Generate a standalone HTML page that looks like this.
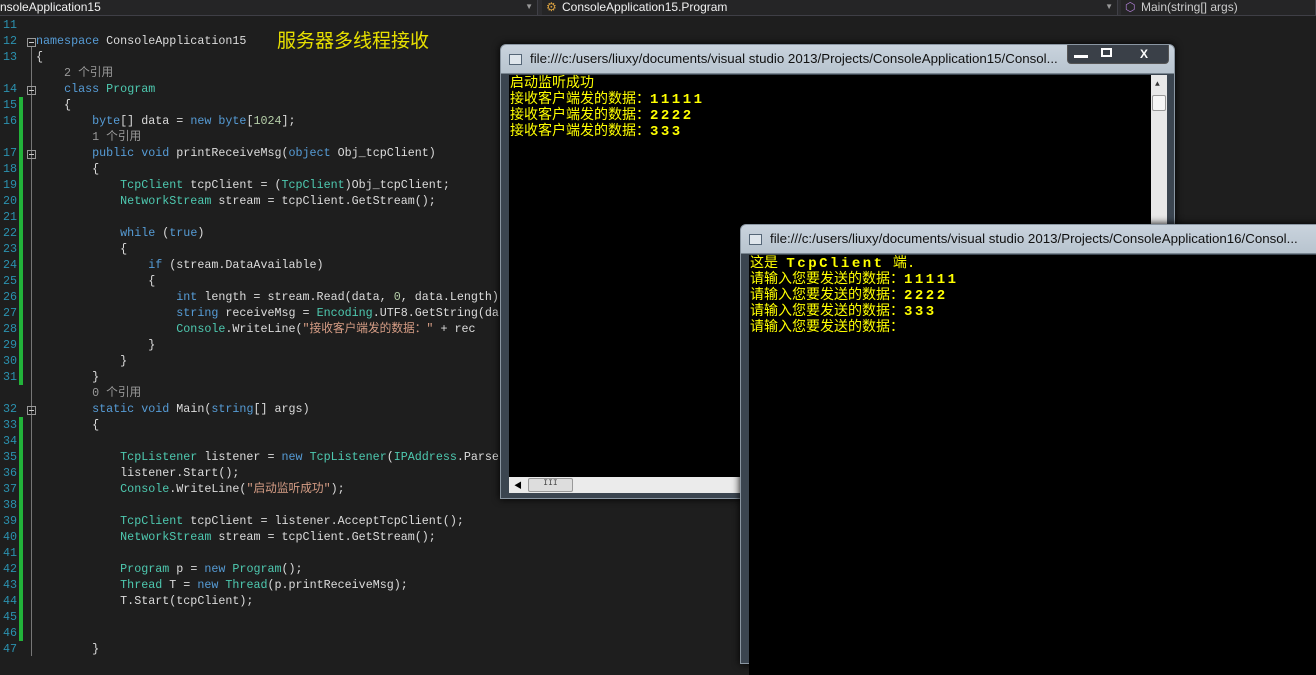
<!DOCTYPE html>
<html><head><meta charset="utf-8"><style>
*{margin:0;padding:0;box-sizing:border-box}
body{width:1316px;height:656px;overflow:hidden;background:#1e1e1e;position:relative;font-family:"Liberation Mono","Noto Sans CJK SC",monospace}
.top{position:absolute;left:0;top:0;width:1316px;height:16px;background:#2d2d30;border-bottom:1px solid #3f3f46;font-family:"Liberation Sans","Noto Sans CJK SC",sans-serif;font-size:12px;color:#f1f1f1}
.top div{position:absolute;top:0;height:15px;line-height:14px;background:#252526;border-right:1px solid #3f3f46}
.ln{position:absolute;left:0;width:17px;text-align:right;color:#2b91af;font-size:11.7px;height:16px;line-height:16px}
.c{position:absolute;left:36px;white-space:pre;font-size:11.7px;color:#dcdcdc;height:16px;line-height:16px}
.k{color:#569cd6}.t{color:#4ec9b0}.s{color:#d69d85}.n{color:#b5cea8}.r{color:#999}
.fold{position:absolute;left:27px;width:9px;height:9px;border:1px solid #999;}
.fold:after{content:"";position:absolute;left:1px;top:3px;width:5px;height:1px;background:#ccc}
.vl{position:absolute;left:31px;width:1px;background:#777}
.gb{position:absolute;left:19px;width:4px;background:#22b33a}
.win{position:absolute;background:#3b4550;border:1px solid #8a96a2;border-radius:6px 6px 0 0;box-shadow:0 0 8px #000}
.tt{position:absolute;font-family:"Liberation Sans",sans-serif;font-size:13.3px;color:#111;white-space:nowrap}
.con{position:absolute;background:#000;color:#ff0;font-family:"Liberation Mono","Noto Sans CJK SC",monospace;font-size:14px;line-height:16px;white-space:pre}
.con b{font-family:"Liberation Mono",monospace;font-weight:bold;font-size:14px;letter-spacing:2.5px}
</style></head><body>
<div class="top">
<div style="left:0;width:538px;padding-left:0">nsoleApplication15<span style="position:absolute;right:4px;color:#999;font-size:8px">▼</span></div>
<div style="left:542px;width:576px;padding-left:20px"><span style="position:absolute;left:4px;color:#d8a040">⚙</span>ConsoleApplication15.Program<span style="position:absolute;right:4px;color:#999;font-size:8px">▼</span></div>
<div style="left:1121px;width:195px;padding-left:20px;color:#ccc"><span style="position:absolute;left:4px;color:#b180d7">⬡</span>Main(string[] args)</div>
</div>

<div class="gb" style="top:97px;height:288px"></div>
<div class="gb" style="top:417px;height:224px"></div>
<div class="vl" style="top:46px;height:610px"></div>

<div class="ln" style="top:17px">11</div>
<div class="ln" style="top:33px">12</div><div class="fold" style="top:38px"></div><div class="c" style="top:33px"><span class="k">namespace</span> ConsoleApplication15</div>
<div style="position:absolute;left:277px;top:31px;color:#e8e000;font-family:'Liberation Sans','Noto Sans CJK SC',sans-serif;font-size:19px;line-height:22px">服务器多线程接收</div>
<div class="ln" style="top:49px">13</div><div class="c" style="top:49px">{</div>
<div class="c r" style="top:65px;color:#999">    2 个引用</div>
<div class="ln" style="top:81px">14</div><div class="fold" style="top:86px"></div><div class="c" style="top:81px">    <span class="k">class</span> <span class="t">Program</span></div>
<div class="ln" style="top:97px">15</div><div class="c" style="top:97px">    {</div>
<div class="ln" style="top:113px">16</div><div class="c" style="top:113px">        <span class="k">byte</span>[] data = <span class="k">new</span> <span class="k">byte</span>[<span class="n">1024</span>];</div>
<div class="c" style="top:129px;color:#999">        1 个引用</div>
<div class="ln" style="top:145px">17</div><div class="fold" style="top:150px"></div><div class="c" style="top:145px">        <span class="k">public</span> <span class="k">void</span> printReceiveMsg(<span class="k">object</span> Obj_tcpClient)</div>
<div class="ln" style="top:161px">18</div><div class="c" style="top:161px">        {</div>
<div class="ln" style="top:177px">19</div><div class="c" style="top:177px">            <span class="t">TcpClient</span> tcpClient = (<span class="t">TcpClient</span>)Obj_tcpClient;</div>
<div class="ln" style="top:193px">20</div><div class="c" style="top:193px">            <span class="t">NetworkStream</span> stream = tcpClient.GetStream();</div>
<div class="ln" style="top:209px">21</div>
<div class="ln" style="top:225px">22</div><div class="c" style="top:225px">            <span class="k">while</span> (<span class="k">true</span>)</div>
<div class="ln" style="top:241px">23</div><div class="c" style="top:241px">            {</div>
<div class="ln" style="top:257px">24</div><div class="c" style="top:257px">                <span class="k">if</span> (stream.DataAvailable)</div>
<div class="ln" style="top:273px">25</div><div class="c" style="top:273px">                {</div>
<div class="ln" style="top:289px">26</div><div class="c" style="top:289px">                    <span class="k">int</span> length = stream.Read(data, <span class="n">0</span>, data.Length);</div>
<div class="ln" style="top:305px">27</div><div class="c" style="top:305px">                    <span class="k">string</span> receiveMsg = <span class="t">Encoding</span>.UTF8.GetString(da</div>
<div class="ln" style="top:321px">28</div><div class="c" style="top:321px">                    <span class="t">Console</span>.WriteLine(<span class="s">"接收客户端发的数据："</span> + rec</div>
<div class="ln" style="top:337px">29</div><div class="c" style="top:337px">                }</div>
<div class="ln" style="top:353px">30</div><div class="c" style="top:353px">            }</div>
<div class="ln" style="top:369px">31</div><div class="c" style="top:369px">        }</div>
<div class="c" style="top:385px;color:#999">        0 个引用</div>
<div class="ln" style="top:401px">32</div><div class="fold" style="top:406px"></div><div class="c" style="top:401px">        <span class="k">static</span> <span class="k">void</span> Main(<span class="k">string</span>[] args)</div>
<div class="ln" style="top:417px">33</div><div class="c" style="top:417px">        {</div>
<div class="ln" style="top:433px">34</div>
<div class="ln" style="top:449px">35</div><div class="c" style="top:449px">            <span class="t">TcpListener</span> listener = <span class="k">new</span> <span class="t">TcpListener</span>(<span class="t">IPAddress</span>.Parse</div>
<div class="ln" style="top:465px">36</div><div class="c" style="top:465px">            listener.Start();</div>
<div class="ln" style="top:481px">37</div><div class="c" style="top:481px">            <span class="t">Console</span>.WriteLine(<span class="s">"启动监听成功"</span>);</div>
<div class="ln" style="top:497px">38</div>
<div class="ln" style="top:513px">39</div><div class="c" style="top:513px">            <span class="t">TcpClient</span> tcpClient = listener.AcceptTcpClient();</div>
<div class="ln" style="top:529px">40</div><div class="c" style="top:529px">            <span class="t">NetworkStream</span> stream = tcpClient.GetStream();</div>
<div class="ln" style="top:545px">41</div>
<div class="ln" style="top:561px">42</div><div class="c" style="top:561px">            <span class="t">Program</span> p = <span class="k">new</span> <span class="t">Program</span>();</div>
<div class="ln" style="top:577px">43</div><div class="c" style="top:577px">            <span class="t">Thread</span> T = <span class="k">new</span> <span class="t">Thread</span>(p.printReceiveMsg);</div>
<div class="ln" style="top:593px">44</div><div class="c" style="top:593px">            T.Start(tcpClient);</div>
<div class="ln" style="top:609px">45</div>
<div class="ln" style="top:625px">46</div>
<div class="ln" style="top:641px">47</div><div class="c" style="top:641px">        }</div>

<!-- window 1 -->
<div class="win" style="left:500px;top:44px;width:675px;height:455px;background:linear-gradient(#c9d3dd,#b8c4cf 28px,#3b4550 29px)">
<div style="position:absolute;left:8px;top:9px;width:13px;height:11px;background:#dfe6ec;border:1px solid #567"></div>
<div class="tt" style="left:29px;top:6px">file:///c:/users/liuxy/documents/visual studio 2013/Projects/ConsoleApplication15/Consol...</div>
<div style="position:absolute;left:566px;top:0;width:102px;height:19px;border:1px solid #555;border-top:none;border-radius:0 0 4px 4px;background:#3a4048;color:#fff;font:bold 11px 'Liberation Sans';">
<span style="position:absolute;left:6px;width:14px;height:3px;top:10px;background:#fff"></span>
<span style="position:absolute;left:33px;top:3px;width:11px;height:9px;border:2px solid #fff"></span>
<span style="position:absolute;left:72px;top:2px;font-size:12px">X</span></div>
<div class="con" style="left:8px;top:30px;width:642px;height:402px;padding:1px 0 0 1px">启动监听成功
接收客户端发的数据：<b>11111</b>
接收客户端发的数据：<b>2222</b>
接收客户端发的数据：<b>333</b></div>
<div style="position:absolute;left:650px;top:30px;width:16px;height:402px;background:#e8e8e8"><div style="position:absolute;left:1px;top:20px;width:14px;height:16px;background:#f6f6f6;border:1px solid #999;border-radius:2px"></div><div style="position:absolute;left:4px;top:5px;font-size:8px;color:#333">▲</div></div>
<div style="position:absolute;left:8px;top:432px;width:658px;height:16px;background:#ebebeb"><div style="position:absolute;left:19px;top:1px;width:45px;height:14px;background:#ddd;border:1px solid #999;border-radius:2px;font-size:8px;text-align:center;color:#444">III</div><div style="position:absolute;left:5px;top:3px;font-size:8px">◀</div></div>
</div>

<!-- window 2 -->
<div class="win" style="left:740px;top:224px;width:590px;height:440px;background:linear-gradient(#c9d3dd,#b8c4cf 28px,#3b4550 29px)">
<div style="position:absolute;left:8px;top:9px;width:13px;height:11px;background:#dfe6ec;border:1px solid #567"></div>
<div class="tt" style="left:29px;top:6px">file:///c:/users/liuxy/documents/visual studio 2013/Projects/ConsoleApplication16/Consol...</div>
<div class="con" style="left:8px;top:30px;width:580px;height:420px;padding:1px 0 0 1px">这是 <b>TcpClient</b> 端.
请输入您要发送的数据：<b>11111</b>
请输入您要发送的数据：<b>2222</b>
请输入您要发送的数据：<b>333</b>
请输入您要发送的数据：</div>
</div>
</body></html>
